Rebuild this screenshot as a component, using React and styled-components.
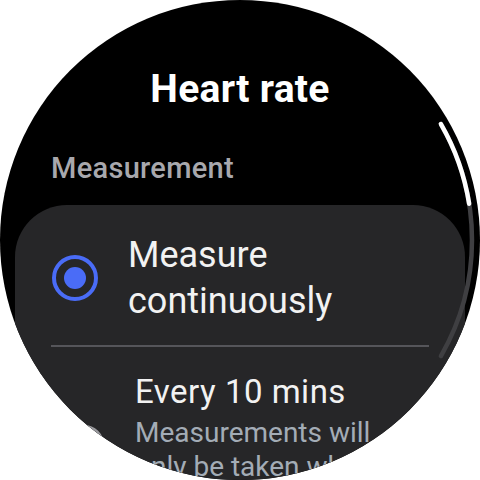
import React from 'react';
import styled, { createGlobalStyle, css } from 'styled-components';

const GlobalStyle = createGlobalStyle`
  html, body {
    margin: 0;
    padding: 0;
    background: #ffffff;
  }
  body {
    font-family: Roboto, "Noto Sans", "Liberation Sans", sans-serif;
  }
`;

const Screen = styled.div`
  position: relative;
  width: 480px;
  height: 480px;
  border-radius: 50%;
  overflow: hidden;
  background: #000;
  display: flex;
  flex-direction: column;
  padding-top: 66px;
  box-sizing: border-box;
`;

const Title = styled.h1`
  margin: 0;
  font-size: 39px;
  line-height: 46px;
  font-weight: 700;
  letter-spacing: 0.3px;
  color: #ffffff;
  text-align: center;
`;

const SectionLabel = styled.div`
  margin: 39px 0 20px 51px;
  font-size: 29px;
  line-height: 34px;
  font-weight: 500;
  letter-spacing: 0.3px;
  color: #a8a8ad;
`;

const Card = styled.div`
  margin: 0 15px;
  background: #262628;
  border-radius: 52px 52px 0 0;
  flex: 1;
`;

const Option = styled.div`
  display: flex;
  align-items: center;
  gap: ${p => p.$gap}px;
  padding: ${p => p.$pad};
`;

const Radio = styled.div`
  flex: none;
  width: ${p => p.$size}px;
  height: ${p => p.$size}px;
  border-radius: 50%;
  box-sizing: border-box;
  border: ${p => Math.round(p.$size / 11)}px solid ${p => (p.$checked ? '#4a6cf7' : '#9a9a9e')};
  display: flex;
  align-items: center;
  justify-content: center;

  ${p => p.$checked && css`
    &::after {
      content: '';
      width: ${Math.round(p.$size * 0.48)}px;
      height: ${Math.round(p.$size * 0.48)}px;
      border-radius: 50%;
      background: #4a6cf7;
    }
  `}
`;

const Texts = styled.div`
  display: flex;
  flex-direction: column;
  min-width: 0;
`;

const Label = styled.div`
  font-size: ${p => p.$size}px;
  line-height: ${p => p.$line}px;
  letter-spacing: ${p => p.$track || 0}px;
  color: #f2f2f2;
`;

const Sub = styled.div`
  margin-top: 4px;
  font-size: 28px;
  line-height: 34px;
  color: #a3acb6;
`;

const Divider = styled.div`
  height: 2px;
  margin: 0 36px;
  background: #55555a;
`;

const ScrollArc = styled.svg`
  position: absolute;
  inset: 0;
  pointer-events: none;
`;

const arcPoint = deg => {
  const a = (deg * Math.PI) / 180;
  return `${240 + 232 * Math.cos(a)} ${240 + 232 * Math.sin(a)}`;
};

const arc = (from, to) => `M ${arcPoint(from)} A 232 232 0 0 1 ${arcPoint(to)}`;

const App = () => (
  <>
    <GlobalStyle />
    <Screen>
      <Title>Heart rate</Title>
      <SectionLabel>Measurement</SectionLabel>
      <Card>
        <Option $gap={30} $pad="27px 40px 21px 37px">
          <Radio $size={46} $checked />
          <Texts>
            <Label $size={36} $line={46}>Measure continuously</Label>
          </Texts>
        </Option>
        <Divider />
        <Option $gap={31} $pad="25px 70px 0 49px">
          <Radio $size={40} />
          <Texts>
            <Label $size={33} $line={40} $track={0.5}>Every 10 mins</Label>
            <Sub>Measurements will only be taken when you're still</Sub>
          </Texts>
        </Option>
      </Card>
      <ScrollArc width="480" height="480" viewBox="0 0 480 480">
        <path d={arc(-30, 30)} stroke="#3f3f42" strokeWidth="4.5" strokeLinecap="round" fill="none" />
        <path d={arc(-30, -9)} stroke="#ffffff" strokeWidth="4.5" strokeLinecap="round" fill="none" />
      </ScrollArc>
    </Screen>
  </>
);

export default App;
